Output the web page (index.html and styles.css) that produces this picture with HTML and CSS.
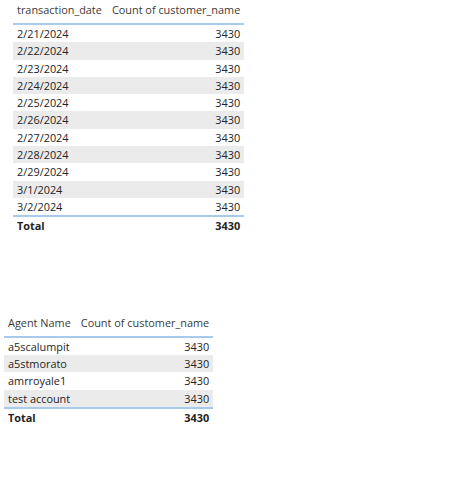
FILE: index.html
```html
<!DOCTYPE html>
<html>
<head>
<meta charset="utf-8">
<link rel="stylesheet" href="styles.css">
</head>
<body>
<div class="page">
  <table class="matrix matrix-dates">
    <thead>
      <tr><th class="c1">transaction_date</th><th class="c2">Count of customer_name</th></tr>
    </thead>
    <tbody>
      <tr><td class="c1">2/21/2024</td><td class="c2">3430</td></tr>
      <tr><td class="c1">2/22/2024</td><td class="c2">3430</td></tr>
      <tr><td class="c1">2/23/2024</td><td class="c2">3430</td></tr>
      <tr><td class="c1">2/24/2024</td><td class="c2">3430</td></tr>
      <tr><td class="c1">2/25/2024</td><td class="c2">3430</td></tr>
      <tr><td class="c1">2/26/2024</td><td class="c2">3430</td></tr>
      <tr><td class="c1">2/27/2024</td><td class="c2">3430</td></tr>
      <tr><td class="c1">2/28/2024</td><td class="c2">3430</td></tr>
      <tr><td class="c1">2/29/2024</td><td class="c2">3430</td></tr>
      <tr><td class="c1">3/1/2024</td><td class="c2">3430</td></tr>
      <tr><td class="c1">3/2/2024</td><td class="c2">3430</td></tr>
    </tbody>
    <tfoot>
      <tr><td class="c1">Total</td><td class="c2">3430</td></tr>
    </tfoot>
  </table>

  <table class="matrix matrix-agents">
    <thead>
      <tr><th class="c1">Agent Name</th><th class="c2">Count of customer_name</th></tr>
    </thead>
    <tbody>
      <tr><td class="c1">a5scalumpit</td><td class="c2">3430</td></tr>
      <tr><td class="c1">a5stmorato</td><td class="c2">3430</td></tr>
      <tr><td class="c1">amrroyale1</td><td class="c2">3430</td></tr>
      <tr><td class="c1">test account</td><td class="c2">3430</td></tr>
    </tbody>
    <tfoot>
      <tr><td class="c1">Total</td><td class="c2">3430</td></tr>
    </tfoot>
  </table>
</div>
</body>
</html>
```

FILE: styles.css
```css
html, body {
  margin: 0;
  padding: 0;
  background: #ffffff;
}

body {
  font-family: "Open Sans", "Noto Sans", sans-serif;
  font-size: 10.9px;
  color: #252423;
}

.page {
  display: flex;
  flex-direction: column;
  align-items: flex-start;
}

.matrix {
  border-collapse: collapse;
  border-spacing: 0;
}

.matrix-dates {
  margin-left: 13px;
  margin-top: 0;
}

.matrix-agents {
  margin-left: 4px;
  margin-top: 78px;
}

.matrix th,
.matrix td {
  padding: 0 4px;
  white-space: nowrap;
  line-height: 17.3px;
}

.matrix th {
  font-weight: normal;
  color: #3b3a39;
  height: 24px;
  vertical-align: middle;
  padding-bottom: 3px;
  box-sizing: border-box;
}

.matrix th.c1 {
  text-align: left;
  padding-right: 5px;
}

.matrix th.c2 {
  padding-left: 5px;
}

.matrix thead tr {
  border-bottom: 2px solid #a8cbed;
}

.matrix td.c1 {
  text-align: left;
}

.matrix td.c2 {
  text-align: right;
}

.matrix tbody tr:nth-child(even) {
  background: #ebebeb;
}

.matrix tfoot tr {
  border-top: 2px solid #a8cbed;
}

.matrix tfoot td {
  font-weight: bold;
  color: #252423;
  line-height: 17.5px;
}
```
